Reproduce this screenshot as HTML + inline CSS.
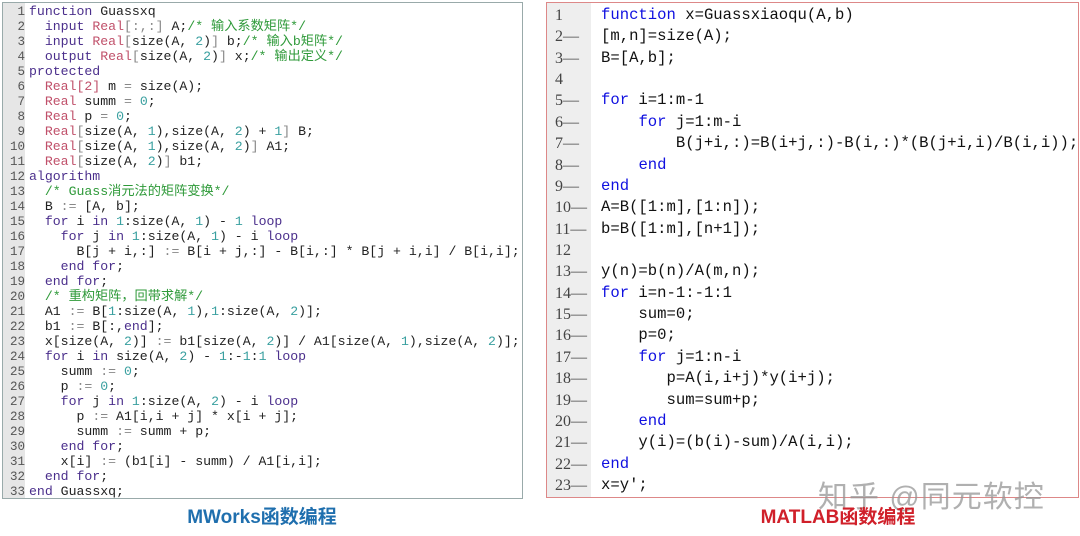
<!DOCTYPE html>
<html><head><meta charset="utf-8"><style>
body{margin:0;width:1080px;height:536px;background:#fff;position:relative;overflow:hidden;font-family:"Liberation Sans","Noto Sans CJK SC",sans-serif}
#L{position:absolute;left:2px;top:2px;width:519px;height:495px;border:1px solid #9aa;background:#fff}
#Lg{position:absolute;left:0;top:0;width:22px;height:100%;background:#e6e6e6}
#Lc{position:absolute;left:0;top:1px}
.l{height:15px;overflow:visible;font:13.2px/15px "Liberation Mono","Noto Sans CJK SC",monospace;color:#222;white-space:pre}
.n{display:inline-block;width:22px;text-align:right;color:#555;margin-right:4px;font-size:12.5px}
.k{color:#4b2f8c}.t{color:#c0506a}.c{color:#2f9a3a}.d{color:#3aa0a0}.s{color:#888}
#R{position:absolute;left:546px;top:2px;width:531px;height:494px;border:1px solid #d88;background:#fff;overflow:hidden}
#Rg{position:absolute;left:0;top:0;width:44px;height:100%;background:#eee}
.r{position:absolute;left:0;height:21px;width:531px;font:15.6px/21px "Liberation Mono",monospace;color:#111;white-space:pre}
.m{position:absolute;left:8px;top:0;color:#444;font-family:"Liberation Serif",serif;font-size:16px}
.x{position:absolute;left:54px;top:0}
.b{color:#1010e0}
.cap{position:absolute;top:502px;font-size:19px;font-weight:bold;text-align:center}
</style></head><body>
<div id="L"><div id="Lg"></div><div id="Lc">
<div class="l"><span class="n">1</span><span class="k">function</span> Guassxq</div>
<div class="l"><span class="n">2</span>  <span class="k">input</span> <span class="t">Real</span><span class="s">[:,:]</span> A;<span class="c">/* 输入系数矩阵*/</span></div>
<div class="l"><span class="n">3</span>  <span class="k">input</span> <span class="t">Real</span><span class="s">[</span>size(A, <span class="d">2</span>)<span class="s">]</span> b;<span class="c">/* 输入b矩阵*/</span></div>
<div class="l"><span class="n">4</span>  <span class="k">output</span> <span class="t">Real</span><span class="s">[</span>size(A, <span class="d">2</span>)<span class="s">]</span> x;<span class="c">/* 输出定义*/</span></div>
<div class="l"><span class="n">5</span><span class="k">protected</span></div>
<div class="l"><span class="n">6</span>  <span class="t">Real[2]</span> m <span class="s">=</span> size(A);</div>
<div class="l"><span class="n">7</span>  <span class="t">Real</span> summ <span class="s">=</span> <span class="d">0</span>;</div>
<div class="l"><span class="n">8</span>  <span class="t">Real</span> p <span class="s">=</span> <span class="d">0</span>;</div>
<div class="l"><span class="n">9</span>  <span class="t">Real</span><span class="s">[</span>size(A, <span class="d">1</span>),size(A, <span class="d">2</span>) + <span class="d">1</span><span class="s">]</span> B;</div>
<div class="l"><span class="n">10</span>  <span class="t">Real</span><span class="s">[</span>size(A, <span class="d">1</span>),size(A, <span class="d">2</span>)<span class="s">]</span> A1;</div>
<div class="l"><span class="n">11</span>  <span class="t">Real</span><span class="s">[</span>size(A, <span class="d">2</span>)<span class="s">]</span> b1;</div>
<div class="l"><span class="n">12</span><span class="k">algorithm</span></div>
<div class="l"><span class="n">13</span>  <span class="c">/* Guass消元法的矩阵变换*/</span></div>
<div class="l"><span class="n">14</span>  B <span class="s">:=</span> [A, b];</div>
<div class="l"><span class="n">15</span>  <span class="k">for</span> i <span class="k">in</span> <span class="d">1</span>:size(A, <span class="d">1</span>) - <span class="d">1</span> <span class="k">loop</span></div>
<div class="l"><span class="n">16</span>    <span class="k">for</span> j <span class="k">in</span> <span class="d">1</span>:size(A, <span class="d">1</span>) - i <span class="k">loop</span></div>
<div class="l"><span class="n">17</span>      B[j + i,:] <span class="s">:=</span> B[i + j,:] - B[i,:] * B[j + i,i] / B[i,i];</div>
<div class="l"><span class="n">18</span>    <span class="k">end for</span>;</div>
<div class="l"><span class="n">19</span>  <span class="k">end for</span>;</div>
<div class="l"><span class="n">20</span>  <span class="c">/* 重构矩阵，回带求解*/</span></div>
<div class="l"><span class="n">21</span>  A1 <span class="s">:=</span> B[<span class="d">1</span>:size(A, <span class="d">1</span>),<span class="d">1</span>:size(A, <span class="d">2</span>)];</div>
<div class="l"><span class="n">22</span>  b1 <span class="s">:=</span> B[:,<span class="k">end</span>];</div>
<div class="l"><span class="n">23</span>  x[size(A, <span class="d">2</span>)] <span class="s">:=</span> b1[size(A, <span class="d">2</span>)] / A1[size(A, <span class="d">1</span>),size(A, <span class="d">2</span>)];</div>
<div class="l"><span class="n">24</span>  <span class="k">for</span> i <span class="k">in</span> size(A, <span class="d">2</span>) - <span class="d">1</span>:-<span class="d">1</span>:<span class="d">1</span> <span class="k">loop</span></div>
<div class="l"><span class="n">25</span>    summ <span class="s">:=</span> <span class="d">0</span>;</div>
<div class="l"><span class="n">26</span>    p <span class="s">:=</span> <span class="d">0</span>;</div>
<div class="l"><span class="n">27</span>    <span class="k">for</span> j <span class="k">in</span> <span class="d">1</span>:size(A, <span class="d">2</span>) - i <span class="k">loop</span></div>
<div class="l"><span class="n">28</span>      p <span class="s">:=</span> A1[i,i + j] * x[i + j];</div>
<div class="l"><span class="n">29</span>      summ <span class="s">:=</span> summ + p;</div>
<div class="l"><span class="n">30</span>    <span class="k">end for</span>;</div>
<div class="l"><span class="n">31</span>    x[i] <span class="s">:=</span> (b1[i] - summ) / A1[i,i];</div>
<div class="l"><span class="n">32</span>  <span class="k">end for</span>;</div>
<div class="l"><span class="n">33</span><span class="k">end</span> Guassxq;</div>
</div></div>
<div id="R"><div id="Rg"></div>
<div class="r" style="top:2px"><span class="m">1</span><span class="x"><span class="b">function</span> x=Guassxiaoqu(A,b)</span></div>
<div class="r" style="top:23.4px"><span class="m">2—</span><span class="x">[m,n]=size(A);</span></div>
<div class="r" style="top:44.7px"><span class="m">3—</span><span class="x">B=[A,b];</span></div>
<div class="r" style="top:66.1px"><span class="m">4</span></div>
<div class="r" style="top:87.4px"><span class="m">5—</span><span class="x"><span class="b">for</span> i=1:m-1</span></div>
<div class="r" style="top:108.8px"><span class="m">6—</span><span class="x">    <span class="b">for</span> j=1:m-i</span></div>
<div class="r" style="top:130.2px"><span class="m">7—</span><span class="x">        B(j+i,:)=B(i+j,:)-B(i,:)*(B(j+i,i)/B(i,i));</span></div>
<div class="r" style="top:151.5px"><span class="m">8—</span><span class="x">    <span class="b">end</span></span></div>
<div class="r" style="top:172.9px"><span class="m">9—</span><span class="x"><span class="b">end</span></span></div>
<div class="r" style="top:194.2px"><span class="m">10—</span><span class="x">A=B([1:m],[1:n]);</span></div>
<div class="r" style="top:215.6px"><span class="m">11—</span><span class="x">b=B([1:m],[n+1]);</span></div>
<div class="r" style="top:237px"><span class="m">12</span></div>
<div class="r" style="top:258.3px"><span class="m">13—</span><span class="x">y(n)=b(n)/A(m,n);</span></div>
<div class="r" style="top:279.7px"><span class="m">14—</span><span class="x"><span class="b">for</span> i=n-1:-1:1</span></div>
<div class="r" style="top:301px"><span class="m">15—</span><span class="x">    sum=0;</span></div>
<div class="r" style="top:322.4px"><span class="m">16—</span><span class="x">    p=0;</span></div>
<div class="r" style="top:343.8px"><span class="m">17—</span><span class="x">    <span class="b">for</span> j=1:n-i</span></div>
<div class="r" style="top:365.1px"><span class="m">18—</span><span class="x">       p=A(i,i+j)*y(i+j);</span></div>
<div class="r" style="top:386.5px"><span class="m">19—</span><span class="x">       sum=sum+p;</span></div>
<div class="r" style="top:407.8px"><span class="m">20—</span><span class="x">    <span class="b">end</span></span></div>
<div class="r" style="top:429.2px"><span class="m">21—</span><span class="x">    y(i)=(b(i)-sum)/A(i,i);</span></div>
<div class="r" style="top:450.6px"><span class="m">22—</span><span class="x"><span class="b">end</span></span></div>
<div class="r" style="top:471.9px"><span class="m">23—</span><span class="x">x=y';</span></div>
</div>
<div style="position:absolute;left:818px;top:472px;font-size:30px;color:rgba(150,150,150,0.75);letter-spacing:1px">知乎 @同元软控</div>
<div class="cap" style="left:130px;width:264px;color:#1f6fae">MWorks函数编程</div>
<div class="cap" style="left:706px;width:264px;color:#d0202a">MATLAB函数编程</div>
</body></html>
